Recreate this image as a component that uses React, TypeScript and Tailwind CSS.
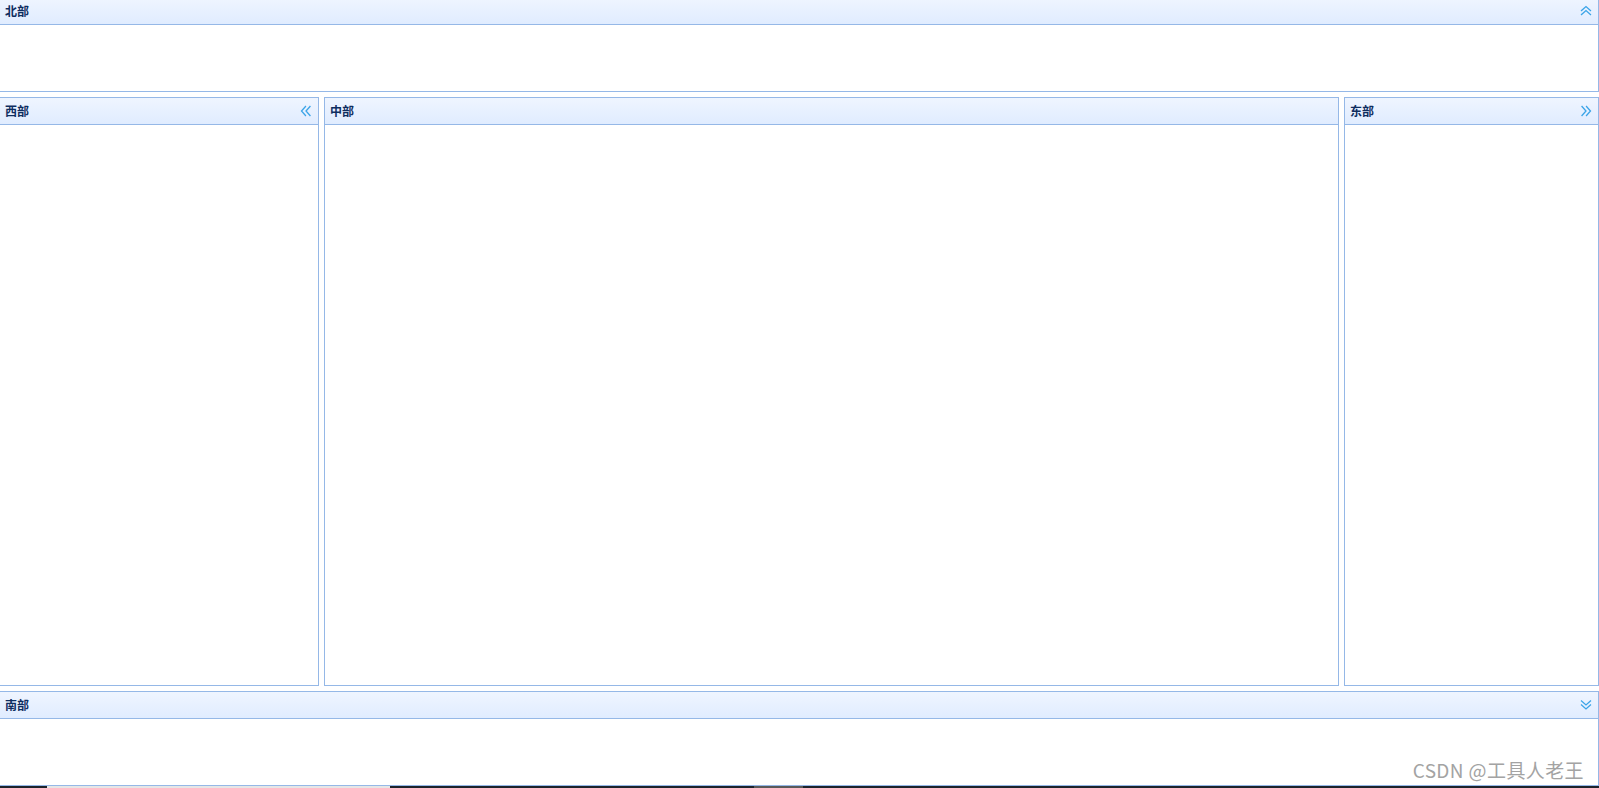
import React from "react";

type Dir = "up" | "down" | "left" | "right";

function ToolIcon({ dir }: { dir: Dir }) {
  let paths: string[] = [];
  if (dir === "up") {
    paths = ["M3.5 7.5 L8 3.5 L12.5 7.5", "M3.5 11.5 L8 7.5 L12.5 11.5"];
  } else if (dir === "down") {
    paths = ["M3.5 4 L8 8 L12.5 4", "M3.5 8 L8 12 L12.5 8"];
  } else if (dir === "left") {
    paths = ["M7.5 3.5 L3.5 8 L7.5 12.5", "M12 3.5 L8 8 L12 12.5"];
  } else {
    paths = ["M4 3.5 L8 8 L4 12.5", "M8.5 3.5 L12.5 8 L8.5 12.5"];
  }
  return (
    <svg width="16" height="16" viewBox="0 0 16 16" className="block">
      {paths.map((d, i) => (
        <path key={i} d={d} fill="none" stroke="#3ba4e8" strokeWidth="1.3" strokeLinecap="square" />
      ))}
    </svg>
  );
}

function Panel({
  title,
  dir,
  className,
}: {
  title: string;
  dir?: Dir;
  className: string;
}) {
  return (
    <div className={"flex flex-col border border-[#95B8E7] bg-white " + className}>
      <div className="flex h-[27px] shrink-0 items-center justify-between border-b border-[#95B8E7] bg-gradient-to-b from-[#EFF5FF] to-[#E0ECFF] pl-[5px] pr-[4px]">
        <span
          className="text-[12px] leading-[16px] font-bold text-[#0E2D5F]"
          style={{ fontFamily: '"Noto Sans CJK SC", "Noto Sans", sans-serif' }}
        >
          {title}
        </span>
        {dir ? <ToolIcon dir={dir} /> : null}
      </div>
      <div className="flex-1 bg-white" />
    </div>
  );
}

export default function App() {
  return (
    <div className="relative h-[788px] w-[1599px] overflow-hidden bg-white">
      <div className="-mt-[3px] -ml-px flex w-[1600px] flex-col gap-[5px]">
        <Panel title="北部" dir="up" className="h-[95px] w-[1600px]" />
        <div className="flex h-[589px] gap-[5px]">
          <Panel title="西部" dir="left" className="h-full w-[320px]" />
          <Panel title="中部" className="h-full w-[1015px]" />
          <Panel title="东部" dir="right" className="h-full w-[255px]" />
        </div>
        <Panel title="南部" dir="down" className="h-[95px] w-[1600px]" />
      </div>
      <div className="flex h-[2px] w-full">
        <div className="w-[47px] bg-[#1d232b]" />
        <div className="w-[343px] bg-[#e6e6e6]" />
        <div className="w-[364px] bg-[#1d232b]" />
        <div className="w-[49px] bg-[#5a5a5a]" />
        <div className="flex-1 bg-[#1d232b]" />
      </div>
      <div
        className="absolute right-[15px] bottom-[9px] text-[19px] leading-[19px] tracking-[0.4px] text-[#a3a3a3] [text-shadow:0_0_1px_#ffffff]"
        style={{ fontFamily: '"Noto Sans CJK SC", "Noto Sans", sans-serif' }}
      >
        CSDN @工具人老王
      </div>
    </div>
  );
}
